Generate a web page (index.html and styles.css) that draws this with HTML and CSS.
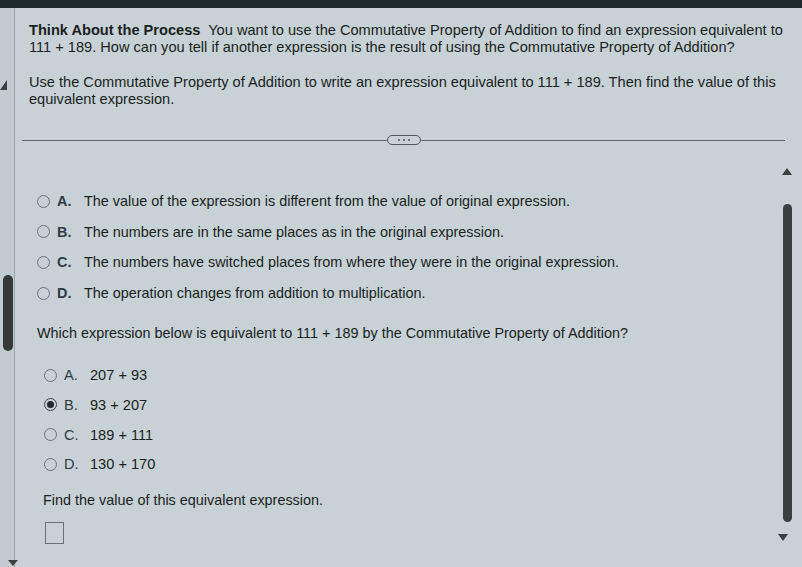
FILE: index.html
```html
<!DOCTYPE html>
<html>
<head>
<meta charset="utf-8">
<link rel="stylesheet" href="styles.css">
</head>
<body>
<div class="topbar"></div>
<div class="page">
  <div class="leftrail">
    <span class="larrow"></span>
    <span class="lthumb"></span>
    <span class="ldown"></span>
  </div>
  <div class="content">
    <div class="header">
      <p class="intro"><b>Think About the Process</b>&nbsp; You want to use the Commutative Property of Addition to find an expression equivalent to 111 + 189. How can you tell if another expression is the result of using the Commutative Property of Addition?</p>
      <p class="task">Use the Commutative Property of Addition to write an expression equivalent to 111 + 189. Then find the value of this equivalent expression.</p>
    </div>
    <div class="divider">
      <span class="line"></span>
      <span class="pill"><i></i><i></i><i></i></span>
      <span class="line short"></span>
    </div>
    <div class="lower">
      <div class="questions">
        <ul class="choices first">
          <li><span class="radio"></span><span class="letter">A.</span><span>The value of the expression is different from the value of original expression.</span></li>
          <li><span class="radio"></span><span class="letter">B.</span><span>The numbers are in the same places as in the original expression.</span></li>
          <li><span class="radio"></span><span class="letter">C.</span><span>The numbers have switched places from where they were in the original expression.</span></li>
          <li><span class="radio"></span><span class="letter">D.</span><span>The operation changes from addition to multiplication.</span></li>
        </ul>
        <p class="q2">Which expression below is equivalent to 111 + 189 by the Commutative Property of Addition?</p>
        <ul class="choices second">
          <li><span class="radio"></span><span class="letter">A.</span><span>207 + 93</span></li>
          <li><span class="radio checked"></span><span class="letter">B.</span><span>93 + 207</span></li>
          <li><span class="radio"></span><span class="letter">C.</span><span>189 + 111</span></li>
          <li><span class="radio"></span><span class="letter">D.</span><span>130 + 170</span></li>
        </ul>
        <p class="q3">Find the value of this equivalent expression.</p>
        <div class="answer"></div>
      </div>
      <div class="rightrail">
        <span class="uparrow"></span>
        <span class="rthumb"></span>
        <span class="downarrow"></span>
      </div>
    </div>
  </div>
</div>
</body>
</html>
```
FILE: styles.css
```css
html, body {
  margin: 0;
  padding: 0;
}
body {
  width: 802px;
  height: 567px;
  overflow: hidden;
  background: #c8d1d5;
  font-family: "Liberation Sans", Arial, sans-serif;
  color: #1a1f22;
}
.topbar {
  height: 8px;
  background: #1f2a2c;
}
.page {
  display: flex;
  height: 559px;
}
.leftrail {
  width: 14px;
  border-right: 1px solid #9ea8ac;
  background: #c2cbcf;
  display: flex;
  flex-direction: column;
  align-items: flex-start;
  flex-shrink: 0;
}
.larrow {
  margin-top: 72px;
  width: 0;
  height: 0;
  border-bottom: 10px solid #3a3f41;
  border-left: 7px solid transparent;
}
.lthumb {
  margin-top: 185px;
  margin-left: 3px;
  width: 10px;
  height: 76px;
  border-radius: 5px;
  background: #35393b;
}
.ldown {
  margin-top: auto;
  margin-left: 8px;
  margin-bottom: 1px;
  width: 0;
  height: 0;
  border-top: 6px solid #3a3f41;
  border-left: 5px solid transparent;
  border-right: 5px solid transparent;
}
.content {
  flex: 1;
  display: flex;
  flex-direction: column;
}
.header {
  padding: 14px 10px 0 14px;
  font-size: 14.6px;
  line-height: 17px;
}
.header p {
  margin: 0;
}
.intro b {
  font-weight: bold;
}
.task {
  margin-top: 18px !important;
}
.divider {
  margin-top: 26px;
  margin-left: 7px;
  width: 763px;
  display: flex;
  align-items: center;
  height: 12px;
}
.divider .line {
  flex: 1;
  height: 1px;
  background: #5d686c;
}
.pill {
  width: 32px;
  height: 8px;
  border: 1.5px solid #4f5a5e;
  border-radius: 6px;
  display: flex;
  justify-content: center;
  align-items: center;
  gap: 3px;
}
.pill i {
  width: 2px;
  height: 2px;
  background: #4f5a5e;
  border-radius: 1px;
}
.lower {
  flex: 1;
  display: flex;
}
.questions {
  flex: 1;
  padding-left: 22px;
}
.choices {
  list-style: none;
  margin: 0;
  padding: 0;
}
.choices li {
  display: flex;
  align-items: center;
  height: 30.6px;
  font-size: 14.4px;
}
.choices.first {
  margin-top: 40px;
  margin-left: 0;
}
.choices.second {
  margin-top: 18px;
  margin-left: 7px;
}
.choices.second li {
  height: 29.7px;
  font-size: 14.6px;
}
.radio {
  width: 11px;
  height: 11px;
  border: 1.5px solid #687174;
  border-radius: 50%;
  flex-shrink: 0;
  margin-right: 7px;
  display: flex;
  align-items: center;
  justify-content: center;
}
.radio.checked {
  border-color: #3a4346;
}
.radio.checked::after {
  content: "";
  width: 7px;
  height: 7px;
  border-radius: 50%;
  background: #20282b;
}
.letter {
  color: #2e3c47;
  font-weight: bold;
  width: 27px;
  flex-shrink: 0;
}
.second .letter {
  font-weight: normal;
  width: 26px;
}
.q2 {
  margin: 17px 0 0 0;
  font-size: 14.4px;
  line-height: 17px;
}
.q3 {
  margin: 13px 0 0 6px;
  font-size: 14.4px;
  line-height: 17px;
}
.answer {
  margin: 13px 0 0 8px;
  width: 17px;
  height: 20px;
  border: 1px solid #6a7275;
}
.rightrail {
  width: 30px;
  flex-shrink: 0;
  display: flex;
  flex-direction: column;
  align-items: center;
}
.uparrow {
  margin-top: 22px;
  width: 0;
  height: 0;
  border-bottom: 7px solid #3a3f41;
  border-left: 5px solid transparent;
  border-right: 5px solid transparent;
}
.rthumb {
  margin-top: 29px;
  width: 9px;
  height: 318px;
  border-radius: 5px;
  background: #3a3f41;
}
.downarrow {
  margin-top: 12px;
  margin-right: 8px;
  width: 0;
  height: 0;
  border-top: 7px solid #3a3f41;
  border-left: 5px solid transparent;
  border-right: 5px solid transparent;
}
```
